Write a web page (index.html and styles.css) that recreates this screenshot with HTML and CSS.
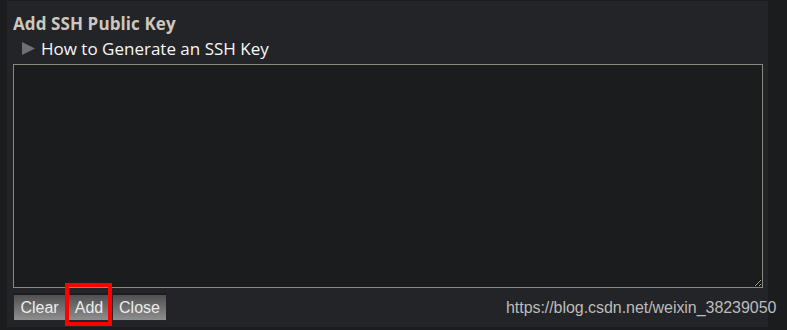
FILE: index.html
```html
<!DOCTYPE html>
<html lang="en">
<head>
    <meta charset="UTF-8">
    <title>Add SSH Public Key</title>
    <link rel="stylesheet" href="styles.css">
</head>
<body>
    <div class="panel">
        <div class="title">Add SSH Public Key</div>
        <div class="howto">
            <svg class="arrow" width="13" height="13" viewBox="0 0 13 13"><polygon points="0,0 13,6.5 0,13" fill="#6f7072"/></svg>
            <span>How to Generate an SSH Key</span>
        </div>
        <textarea class="key-input"></textarea>
        <div class="buttons">
            <button class="btn btn-clear">Clear</button>
            <button class="btn btn-add">Add</button>
            <button class="btn btn-close">Close</button>
            <div class="mark"></div>
        </div>
    </div>
    <div class="watermark">https://blog.csdn.net/weixin_38239050</div>
</body>
</html>
```

FILE: styles.css
```css
body {
    margin: 0;
    background-color: #1b1c1e;
    font-family: "Open Sans", "Noto Sans", sans-serif;
    height: 330px;
    overflow: hidden;
    position: relative;
}
.panel {
    margin: 1px 0 0 7px;
    width: 755px;
    height: 313px;
    padding: 13px 0 0 6px;
    background-color: #232427;
}
.title {
    height: 20px;
    line-height: 20px;
    font-size: 17px;
    font-weight: bold;
    letter-spacing: 0.1px;
    color: #cdc8bd;
}
.howto {
    display: flex;
    align-items: center;
    margin-top: 3px;
    height: 22px;
    padding-left: 9px;
    font-size: 17px;
    color: #f7f7f7;
}
.arrow {
    margin-right: 6px;
}
.key-input {
    display: block;
    box-sizing: border-box;
    margin-top: 5px;
    width: 750px;
    height: 224px;
    background-color: #1b1c1e;
    border: 1px solid #8c877d;
    color: #ddd;
    resize: both;
    outline: none;
}
.buttons {
    position: relative;
    display: flex;
    margin-top: 5px;
}
.btn {
    box-sizing: border-box;
    height: 28px;
    padding: 0;
    border: 1px solid #26232a;
    border-top: 2px solid #1f1a22;
    background: linear-gradient(#505050, #8e8e8e);
    color: #ececec;
    font-family: "Liberation Sans", Arial, sans-serif;
    font-size: 16px;
}
.btn-clear { width: 53px; }
.btn-add { width: 46px; }
.btn-close { width: 55px; }
.mark {
    position: absolute;
    left: 52px;
    top: -10px;
    width: 39px;
    height: 35px;
    border: 4px solid #ff0000;
}
.watermark {
    position: absolute;
    left: 506px;
    top: 299px;
    font-family: "Liberation Sans", Arial, sans-serif;
    font-size: 16px;
    letter-spacing: -0.05px;
    color: #bcbcbc;
}
```
